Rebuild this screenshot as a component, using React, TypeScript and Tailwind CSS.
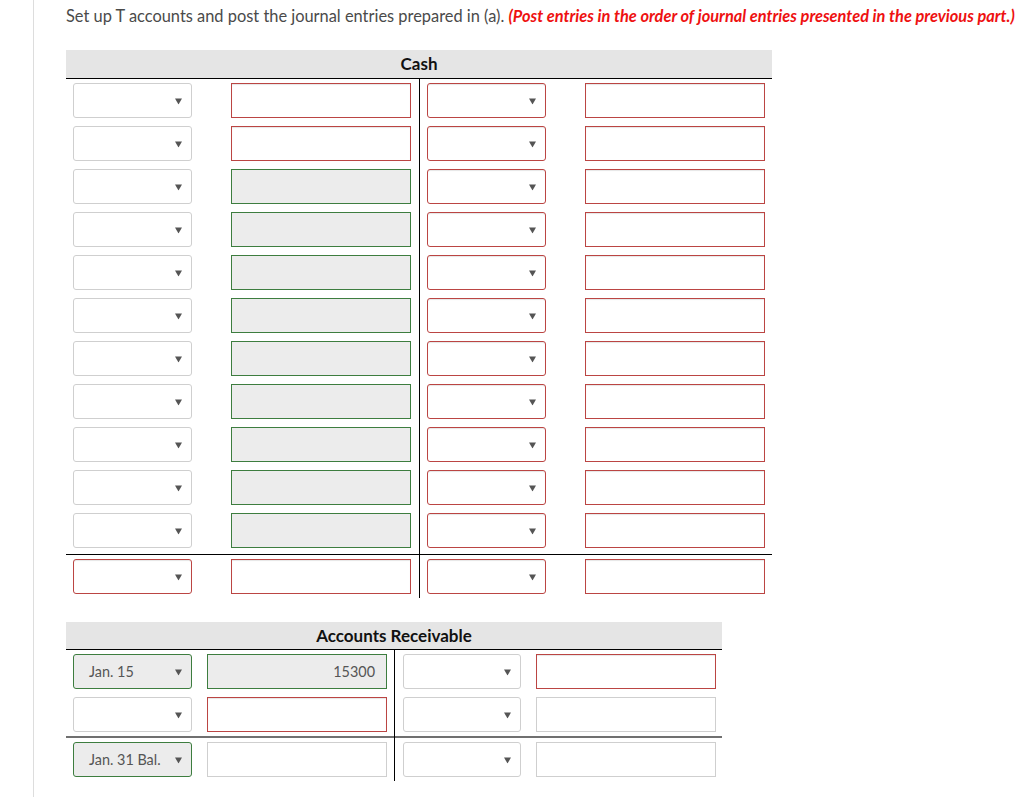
import React from "react";

type Kind = "plain" | "red" | "green";

const borderFor = (k: Kind) =>
  k === "red"
    ? "border-[#bb4543] shadow-[inset_0_1px_1px_rgba(0,0,0,0.1)]"
    : k === "green"
    ? "border-[#3d7d3f] bg-[#ececec]"
    : "border-[#cfcfcf]";

function Arrow() {
  return (
    <svg width="7" height="7" viewBox="0 0 7 7" className="absolute right-[9px] top-1/2 -translate-y-1/2">
      <path d="M0 1 L7 1 L3.5 7 Z" fill="#555" />
    </svg>
  );
}

function Select({ kind, w = "w-[119px]", text }: { kind: Kind; w?: string; text?: string }) {
  return (
    <div className={`relative h-[35px] ${w} shrink-0 rounded-[3px] border ${borderFor(kind)} ${kind === "green" ? "" : "bg-white"}`}>
      {text && (
        <span className="absolute left-[15px] top-1/2 -translate-y-1/2 text-[14.4px] text-[#555]">{text}</span>
      )}
      <Arrow />
    </div>
  );
}

function Amount({ kind, text }: { kind: Kind; text?: string }) {
  return (
    <div
      className={`flex h-[35px] w-[180px] shrink-0 items-center justify-end border pr-[11px] text-[14.4px] text-[#555] ${borderFor(kind)} ${
        kind === "green" ? "" : "bg-white"
      }`}
    >
      {text}
    </div>
  );
}

type RowSpec = { ls: Kind; la: Kind; rs: Kind; ra: Kind; lsText?: string; laText?: string };

function CashRow({ r }: { r: RowSpec }) {
  return (
    <div className="flex">
      <div className="flex w-[354px] border-r border-black py-1 pl-[7px]">
        <Select kind={r.ls} text={r.lsText} />
        <div className="ml-[39px]">
          <Amount kind={r.la} text={r.laText} />
        </div>
      </div>
      <div className="flex flex-1 py-1 pl-[7px]">
        <Select kind={r.rs} />
        <div className="ml-[39px]">
          <Amount kind={r.ra} />
        </div>
      </div>
    </div>
  );
}

function ARRow({ r }: { r: RowSpec }) {
  return (
    <div className="flex">
      <div className="flex w-[329px] border-r border-black py-1 pl-[7px]">
        <Select kind={r.ls} text={r.lsText} />
        <div className="ml-[15px]">
          <Amount kind={r.la} text={r.laText} />
        </div>
      </div>
      <div className="flex flex-1 py-1 pl-[8px]">
        <Select kind={r.rs} w="w-[118px]" />
        <div className="ml-[15px]">
          <Amount kind={r.ra} />
        </div>
      </div>
    </div>
  );
}

export default function App() {
  const cashTop: RowSpec[] = [];
  for (let i = 0; i < 11; i++) {
    cashTop.push({ ls: "plain", la: i < 2 ? "red" : "green", rs: "red", ra: "red" });
  }
  const cashBottom: RowSpec = { ls: "red", la: "red", rs: "red", ra: "red" };

  const arTop: RowSpec[] = [
    { ls: "green", lsText: "Jan. 15", la: "green", laText: "15300", rs: "plain", ra: "red" },
    { ls: "plain", la: "red", rs: "plain", ra: "plain" },
  ];
  const arBottom: RowSpec = { ls: "green", lsText: "Jan. 31 Bal.", la: "plain", rs: "plain", ra: "plain" };

  return (
    <div className="min-h-[797px] bg-white" style={{ fontFamily: "Lato, 'Open Sans', sans-serif" }}>
      <div className="ml-[33px] min-h-[797px] border-l border-[#dddddd] pl-[32px] pt-[4px]">
        <p className="whitespace-nowrap text-[16.4px] leading-[24px] text-[#4a4a4a]">
          Set up T accounts and post the journal entries prepared in (a).{" "}
          <span className="font-bold italic text-[#ee1111]">
            (Post entries in the order of journal entries presented in the previous part.)
          </span>
        </p>

        {/* Cash */}
        <div className="mt-[22px] w-[706px]">
          <div className="h-[29px] border-b border-black bg-[#e5e5e5] text-center text-[17px] font-bold leading-[28px] text-[#111]">
            Cash
          </div>
          {cashTop.map((r, i) => (
            <CashRow key={i} r={r} />
          ))}
          <div className="flex h-[2px]">
            <div className="w-[354px] border-r border-black" />
          </div>
          <div className="h-px bg-black" />
          <CashRow r={cashBottom} />
        </div>

        {/* Accounts Receivable */}
        <div className="mt-[24px] w-[656px]">
          <div className="h-[28px] border-b border-black bg-[#e5e5e5] text-center text-[17px] font-bold leading-[27px] text-[#111]">
            Accounts Receivable
          </div>
          {arTop.map((r, i) => (
            <ARRow key={i} r={r} />
          ))}
          <div className="flex h-[2px]">
            <div className="w-[329px] border-r border-black bg-[#707070]" />
            <div className="flex-1 bg-[#707070]" />
          </div>
          <ARRow r={arBottom} />
        </div>
      </div>
    </div>
  );
}
